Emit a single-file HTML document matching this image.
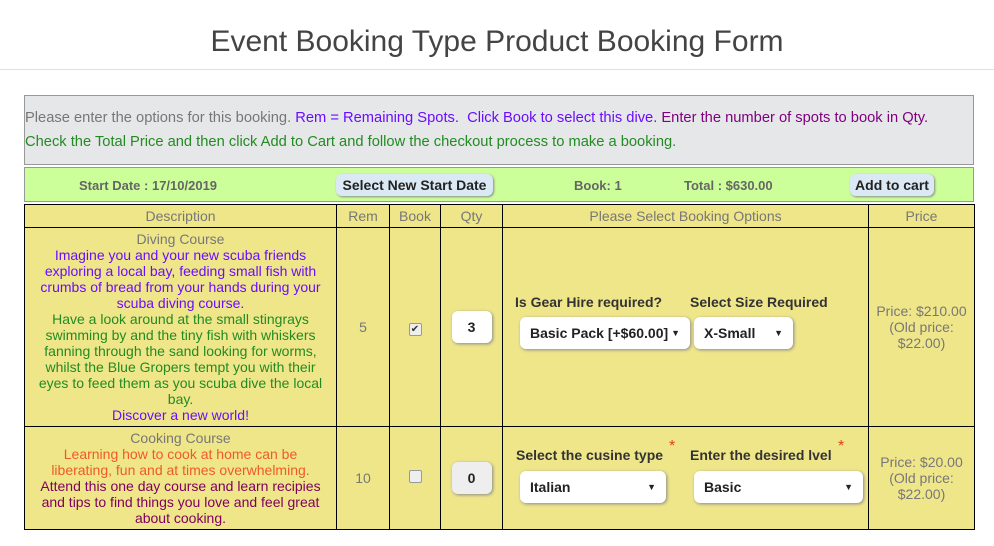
<!DOCTYPE html>
<html><head><meta charset="utf-8"><style>
*{box-sizing:border-box;margin:0;padding:0}
body{width:994px;height:546px;background:#fff;font-family:"Liberation Sans",Arial,sans-serif;position:relative;overflow:hidden}
.a{position:absolute}
h1{position:absolute;left:0;width:994px;top:25px;text-align:center;font-weight:normal;font-size:30px;color:#444}
.hr{left:0;width:994px;top:69px;height:1px;background:#e0e0e0}
.info{left:24px;top:95px;width:950px;height:70px;background:#e6e7e8;border:1px solid #999;font-size:14.7px;line-height:24px;padding-top:10px;padding-left:0;white-space:nowrap}
.bar{left:24px;top:167px;width:950px;height:35px;background:#ccff99;border:1px solid #999}
.bar span{position:absolute;top:10px;font-size:13px;font-weight:bold;color:#666}
.btn{position:absolute;top:6px;height:22px;background:#dbe9f5;border-radius:6px;box-shadow:1px 1px 2px #888;font-size:14px;font-weight:bold;color:#222;line-height:22px;text-align:center}
table{position:absolute;left:24px;top:204px;width:950px;border-collapse:collapse;background:#efe68a;table-layout:fixed}
td{border:1px solid #000;text-align:center;font-size:14px;color:#777;vertical-align:middle;line-height:16px}
.q{display:inline-block;width:40px;height:32px;border-radius:6px;background:#fff;box-shadow:1px 1px 3px #888;font-weight:bold;color:#222;line-height:32px;font-size:14px}
.cb{display:inline-block;width:13px;height:13px;border:1px solid #999;border-radius:2px;background:#eee;font-size:10px;line-height:11px;color:#333}
.lab{position:absolute;font-size:14px;font-weight:bold;color:#333}
.sel{position:absolute;height:32px;background:#fff;border-radius:6px;box-shadow:1px 1px 3px #888;font-size:14px;font-weight:bold;color:#222;line-height:32px;padding-left:10px;text-align:left}
.sel i{position:absolute;right:10px;font-style:normal;font-size:9px;top:0}
.st{color:#e04020;font-weight:normal;font-size:16px;position:absolute}
</style></head><body>
<h1>Event Booking Type Product Booking Form</h1>
<div class="a hr"></div>
<div class="a info"><span style="color:#777">Please enter the options for this booking. </span><span style="color:#6a0dff">Rem = Remaining Spots.&nbsp; Click Book to select this dive. </span><span style="color:#800080">Enter the number of spots to book in Qty.</span><br><span style="color:#228b22">Check the Total Price and then click Add to Cart and follow the checkout process to make a booking.</span></div>
<div class="a bar">
<span style="left:54px">Start Date : 17/10/2019</span>
<div class="btn" style="left:311px;width:157px">Select New Start Date</div>
<span style="left:549px">Book: 1</span>
<span style="left:659px">Total : $630.00</span>
<div class="btn" style="left:825px;width:84px">Add to cart</div>
</div>
<table>
<colgroup><col style="width:312px"><col style="width:53px"><col style="width:51px"><col style="width:62px"><col style="width:366px"><col style="width:106px"></colgroup>
<tr style="height:23px"><td>Description</td><td>Rem</td><td>Book</td><td>Qty</td><td>Please Select Booking Options</td><td>Price</td></tr>
<tr style="height:199px"><td><span style="color:#777">Diving Course</span><br><span style="color:#6a0dff">Imagine you and your new scuba friends<br>exploring a local bay, feeding small fish with<br>crumbs of bread from your hands during your<br>scuba diving course.</span><br><span style="color:#228b22">Have a look around at the small stingrays<br>swimming by and the tiny fish with whiskers<br>fanning through the sand looking for worms,<br>whilst the Blue Gropers tempt you with their<br>eyes to feed them as you scuba dive the local<br>bay.</span><br><span style="color:#6a0dff">Discover a new world!</span></td>
<td>5</td><td><span class="cb">✔</span></td><td><span class="q">3</span></td>
<td style="position:relative"><span class="lab" style="left:12px;top:66px">Is Gear Hire required?</span><span class="lab" style="left:187px;top:66px">Select Size Required</span>
<div class="sel" style="left:17px;top:89px;width:170px">Basic Pack [+$60.00]<i>▼</i></div>
<div class="sel" style="left:191px;top:89px;width:99px">X-Small<i>▼</i></div></td>
<td>Price: $210.00<br>(Old price:<br>$22.00)</td></tr>
<tr style="height:103px"><td><span style="color:#777">Cooking Course</span><br><span style="color:#f05a28">Learning how to cook at home can be<br>liberating, fun and at times overwhelming.</span><br><span style="color:#800060">Attend this one day course and learn recipies<br>and tips to find things you love and feel great<br>about cooking.</span></td>
<td>10</td><td><span class="cb"></span></td><td><span class="q" style="background:#eee">0</span></td>
<td style="position:relative"><span class="lab" style="left:13px;top:20px">Select the cusine type</span><span class="st" style="left:166px;top:12px">*</span><span class="lab" style="left:187px;top:20px">Enter the desired lvel</span><span class="st" style="left:335px;top:12px">*</span>
<div class="sel" style="left:17px;top:44px;width:146px">Italian<i>▼</i></div>
<div class="sel" style="left:191px;top:44px;width:169px">Basic<i>▼</i></div></td>
<td>Price: $20.00<br>(Old price:<br>$22.00)</td></tr>
</table>
</body></html>
